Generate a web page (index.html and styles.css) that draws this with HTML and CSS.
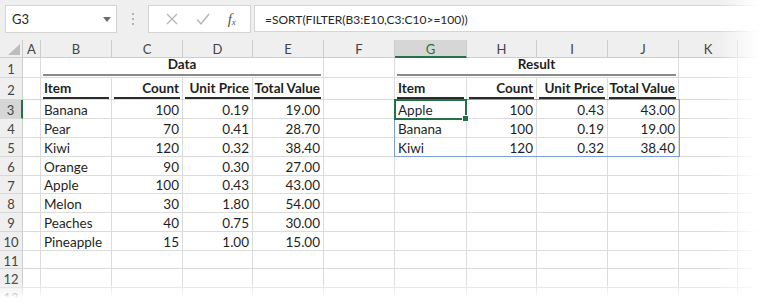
FILE: index.html
```html
<!DOCTYPE html>
<html lang="en">

<head>
    <meta charset="UTF-8">
    <title>SORT + FILTER</title>
    <link rel="stylesheet" href="styles.css">
</head>

<body>
    <div class="window">
        <div class="toolbar">
            <div class="namebox">
                <span>G3</span>
                <svg class="drop" width="8" height="5" viewBox="0 0 8 5"><path d="M0 0h8L4 5z" fill="#6d6d6d"/></svg>
            </div>
            <div class="grip"><i></i><i></i><i></i></div>
            <div class="fbuttons">
                <svg width="14" height="14" viewBox="0 0 14 14"><path d="M2 2l10 10M12 2L2 12" stroke="#b4b4b4" stroke-width="1.3"/></svg>
                <svg width="16" height="14" viewBox="0 0 16 14"><path d="M2 7.5l4 4.5L14 2" stroke="#b4b4b4" stroke-width="1.4" fill="none"/></svg>
                <span class="fx">f<sub>x</sub></span>
            </div>
            <div class="formula">=SORT(FILTER(B3:E10,C3:C10&gt;=100))</div>
        </div>

        <div class="sheet">
            <div class="row hdr">
                <div class="cell c-hd corner">
                    <svg width="12" height="11" viewBox="0 0 12 11"><path d="M0 11L12 0v11z" fill="#bdbdbd"/></svg>
                </div>
                <div class="cell c-a">A</div>
                <div class="cell c-b">B</div>
                <div class="cell c-c">C</div>
                <div class="cell c-d">D</div>
                <div class="cell c-e">E</div>
                <div class="cell c-f">F</div>
                <div class="cell c-g active">G</div>
                <div class="cell c-h">H</div>
                <div class="cell c-i">I</div>
                <div class="cell c-j">J</div>
                <div class="cell c-k">K</div>
                <div class="cell c-l"></div>
            </div>

            <div class="row r-20">
                <div class="cell c-hd rh">1</div>
                <div class="cell c-a"></div>
                <div class="cell c-bcde title"><span>Data</span></div>
                <div class="cell c-f"></div>
                <div class="cell c-ghij title"><span>Result</span></div>
                <div class="cell c-k"></div>
                <div class="cell c-l"></div>
            </div>

            <div class="row r-22">
                <div class="cell c-hd rh">2</div>
                <div class="cell c-a"></div>
                <div class="cell c-b head"><span>Item</span></div>
                <div class="cell c-c head num"><span>Count</span></div>
                <div class="cell c-d head num"><span>Unit Price</span></div>
                <div class="cell c-e head num"><span>Total Value</span></div>
                <div class="cell c-f"></div>
                <div class="cell c-g head"><span>Item</span></div>
                <div class="cell c-h head num"><span>Count</span></div>
                <div class="cell c-i head num"><span>Unit Price</span></div>
                <div class="cell c-j head num"><span>Total Value</span></div>
                <div class="cell c-k"></div>
                <div class="cell c-l"></div>
            </div>

            <div class="row r-19">
                <div class="cell c-hd rh active">3</div>
                <div class="cell c-a"></div>
                <div class="cell c-b">Banana</div>
                <div class="cell c-c num">100</div>
                <div class="cell c-d num">0.19</div>
                <div class="cell c-e num">19.00</div>
                <div class="cell c-f"></div>
                <div class="cell c-g">Apple</div>
                <div class="cell c-h num">100</div>
                <div class="cell c-i num">0.43</div>
                <div class="cell c-j num">43.00</div>
                <div class="cell c-k"></div>
                <div class="cell c-l"></div>
            </div>

            <div class="row r-19">
                <div class="cell c-hd rh">4</div>
                <div class="cell c-a"></div>
                <div class="cell c-b">Pear</div>
                <div class="cell c-c num">70</div>
                <div class="cell c-d num">0.41</div>
                <div class="cell c-e num">28.70</div>
                <div class="cell c-f"></div>
                <div class="cell c-g">Banana</div>
                <div class="cell c-h num">100</div>
                <div class="cell c-i num">0.19</div>
                <div class="cell c-j num">19.00</div>
                <div class="cell c-k"></div>
                <div class="cell c-l"></div>
            </div>

            <div class="row r-19">
                <div class="cell c-hd rh">5</div>
                <div class="cell c-a"></div>
                <div class="cell c-b">Kiwi</div>
                <div class="cell c-c num">120</div>
                <div class="cell c-d num">0.32</div>
                <div class="cell c-e num">38.40</div>
                <div class="cell c-f"></div>
                <div class="cell c-g">Kiwi</div>
                <div class="cell c-h num">120</div>
                <div class="cell c-i num">0.32</div>
                <div class="cell c-j num">38.40</div>
                <div class="cell c-k"></div>
                <div class="cell c-l"></div>
            </div>

            <div class="row r-19">
                <div class="cell c-hd rh">6</div>
                <div class="cell c-a"></div>
                <div class="cell c-b">Orange</div>
                <div class="cell c-c num">90</div>
                <div class="cell c-d num">0.30</div>
                <div class="cell c-e num">27.00</div>
                <div class="cell c-f"></div>
                <div class="cell c-g"></div>
                <div class="cell c-h"></div>
                <div class="cell c-i"></div>
                <div class="cell c-j"></div>
                <div class="cell c-k"></div>
                <div class="cell c-l"></div>
            </div>

            <div class="row r-18">
                <div class="cell c-hd rh">7</div>
                <div class="cell c-a"></div>
                <div class="cell c-b">Apple</div>
                <div class="cell c-c num">100</div>
                <div class="cell c-d num">0.43</div>
                <div class="cell c-e num">43.00</div>
                <div class="cell c-f"></div>
                <div class="cell c-g"></div>
                <div class="cell c-h"></div>
                <div class="cell c-i"></div>
                <div class="cell c-j"></div>
                <div class="cell c-k"></div>
                <div class="cell c-l"></div>
            </div>

            <div class="row r-19">
                <div class="cell c-hd rh">8</div>
                <div class="cell c-a"></div>
                <div class="cell c-b">Melon</div>
                <div class="cell c-c num">30</div>
                <div class="cell c-d num">1.80</div>
                <div class="cell c-e num">54.00</div>
                <div class="cell c-f"></div>
                <div class="cell c-g"></div>
                <div class="cell c-h"></div>
                <div class="cell c-i"></div>
                <div class="cell c-j"></div>
                <div class="cell c-k"></div>
                <div class="cell c-l"></div>
            </div>

            <div class="row r-19">
                <div class="cell c-hd rh">9</div>
                <div class="cell c-a"></div>
                <div class="cell c-b">Peaches</div>
                <div class="cell c-c num">40</div>
                <div class="cell c-d num">0.75</div>
                <div class="cell c-e num">30.00</div>
                <div class="cell c-f"></div>
                <div class="cell c-g"></div>
                <div class="cell c-h"></div>
                <div class="cell c-i"></div>
                <div class="cell c-j"></div>
                <div class="cell c-k"></div>
                <div class="cell c-l"></div>
            </div>

            <div class="row r-19">
                <div class="cell c-hd rh">10</div>
                <div class="cell c-a"></div>
                <div class="cell c-b">Pineapple</div>
                <div class="cell c-c num">15</div>
                <div class="cell c-d num">1.00</div>
                <div class="cell c-e num">15.00</div>
                <div class="cell c-f"></div>
                <div class="cell c-g"></div>
                <div class="cell c-h"></div>
                <div class="cell c-i"></div>
                <div class="cell c-j"></div>
                <div class="cell c-k"></div>
                <div class="cell c-l"></div>
            </div>

            <div class="row r-18">
                <div class="cell c-hd rh">11</div>
                <div class="cell c-a"></div>
                <div class="cell c-b"></div>
                <div class="cell c-c"></div>
                <div class="cell c-d"></div>
                <div class="cell c-e"></div>
                <div class="cell c-f"></div>
                <div class="cell c-g"></div>
                <div class="cell c-h"></div>
                <div class="cell c-i"></div>
                <div class="cell c-j"></div>
                <div class="cell c-k"></div>
                <div class="cell c-l"></div>
            </div>

            <div class="row r-19">
                <div class="cell c-hd rh">12</div>
                <div class="cell c-a"></div>
                <div class="cell c-b"></div>
                <div class="cell c-c"></div>
                <div class="cell c-d"></div>
                <div class="cell c-e"></div>
                <div class="cell c-f"></div>
                <div class="cell c-g"></div>
                <div class="cell c-h"></div>
                <div class="cell c-i"></div>
                <div class="cell c-j"></div>
                <div class="cell c-k"></div>
                <div class="cell c-l"></div>
            </div>

            <div class="row r-19">
                <div class="cell c-hd rh">13</div>
                <div class="cell c-a"></div>
                <div class="cell c-b"></div>
                <div class="cell c-c"></div>
                <div class="cell c-d"></div>
                <div class="cell c-e"></div>
                <div class="cell c-f"></div>
                <div class="cell c-g"></div>
                <div class="cell c-h"></div>
                <div class="cell c-i"></div>
                <div class="cell c-j"></div>
                <div class="cell c-k"></div>
                <div class="cell c-l"></div>
            </div>

            <!-- spill range outline and the active cell -->
            <div class="spill"></div>
            <div class="selection"><i class="handle"></i></div>
        </div>

        <div class="fade-right"></div>
        <div class="fade-bottom"></div>
    </div>
</body>

</html>
```

FILE: styles.css
```css
:root {
    --grid-color: #dcdcdc;
    --header-bg: #efefef;
    --header-line: #cdcdcd;
    --green: #217346;
    --spill-blue: #7e9ed9;
}

body {
    margin: 0;
    background-color: #ffffff;
    font-family: Lato, "Open Sans", sans-serif;
    color: #1f1f1f;
}

.window {
    position: relative;
    width: 768px;
    height: 304px;
    overflow: hidden;
    background-color: #ffffff;
}

/* formula bar */

.toolbar {
    display: flex;
    align-items: flex-start;
    height: 40px;
    padding: 5px 0 0 5px;
    box-sizing: border-box;
    background-color: #efefef;
}

.namebox {
    display: flex;
    align-items: center;
    justify-content: space-between;
    width: 112px;
    height: 28px;
    padding: 0 5px 0 6px;
    box-sizing: border-box;
    background-color: #ffffff;
    border: 1px solid #d4d4d4;
    font-size: 13px;
    color: #262626;
}

.grip {
    display: flex;
    flex-direction: column;
    justify-content: center;
    gap: 3px;
    width: 31px;
    height: 28px;
    align-items: center;
}

.grip i {
    width: 2px;
    height: 2px;
    background-color: #b4b4b4;
}

.fbuttons {
    display: flex;
    align-items: center;
    justify-content: space-around;
    width: 103px;
    height: 28px;
    padding: 0 6px 0 8px;
    box-sizing: border-box;
    background-color: #ffffff;
    border: 1px solid #d4d4d4;
}

.fx {
    font-family: "Liberation Serif", serif;
    font-style: italic;
    font-size: 15px;
    color: #555555;
}

.fx sub {
    font-size: 9px;
    vertical-align: -1px;
}

.formula {
    flex: 1;
    height: 27px;
    margin-left: 3px;
    padding: 1px 0 0 10px;
    line-height: 25px;
    box-sizing: border-box;
    background-color: #ffffff;
    border: 1px solid #d4d4d4;
    border-right: none;
    font-size: 12px;
    color: #262626;
}

/* sheet */

.sheet {
    position: relative;
}

.row {
    display: flex;
}

.r-18 { height: 18px; }
.r-19 { height: 19px; }
.r-20 { height: 20px; }
.r-22 { height: 22px; }

.cell {
    display: flex;
    align-items: flex-end;
    flex-shrink: 0;
    padding: 0 3px 0 3px;
    box-sizing: border-box;
    border-right: 1px solid var(--grid-color);
    border-bottom: 1px solid var(--grid-color);
    font-size: 13.5px;
    line-height: 15px;
    white-space: nowrap;
}

.c-hd { width: 23px; }
.c-a { width: 18px; }
.c-b { width: 71px; }
.c-c { width: 71px; }
.c-d { width: 70px; }
.c-e { width: 71px; }
.c-f { width: 71px; }
.c-g { width: 72px; }
.c-h { width: 70px; }
.c-i { width: 71px; }
.c-j { width: 71px; }
.c-k { width: 59px; }
.c-l { width: 40px; }
.c-bcde { width: 283px; }
.c-ghij { width: 284px; }

.num {
    justify-content: flex-end;
}

/* column and row headers */

.hdr {
    height: 18px;
}

.hdr .cell {
    align-items: center;
    justify-content: center;
    padding: 2px 0 0 0;
    background-color: var(--header-bg);
    border-right-color: var(--header-line);
    border-bottom-color: var(--header-line);
    font-size: 13px;
    color: #444444;
}

.hdr .corner {
    align-items: flex-end;
    justify-content: flex-end;
    padding: 0 2px 2px 0;
}

.hdr .active {
    background-color: #d6d6d6;
    border-bottom: 2px solid var(--green);
    color: var(--green);
}

.rh {
    align-items: center;
    justify-content: center;
    padding: 3px 0 0 0;
    background-color: var(--header-bg);
    border-right-color: var(--header-line);
    border-bottom-color: #d8d8d8;
    font-size: 13px;
    color: #444444;
}

.rh.active {
    background-color: #d6d6d6;
    border-right: 2px solid var(--green);
}

/* table headings */

.title {
    justify-content: center;
    padding: 0 2px 0 2px;
    font-weight: bold;
}

.title span {
    display: block;
    width: 100%;
    text-align: center;
    padding-bottom: 2px;
    border-bottom: 2px solid #8a8a8a;
    margin-bottom: 1px;
}

.head {
    padding: 0 2px 0 2px;
    font-weight: bold;
}

.head span {
    display: block;
    width: 100%;
    padding: 0 1px 1px 1px;
    border-bottom: 2px solid #2b2b2b;
}

.head.num span {
    text-align: right;
}

/* overlays */

.spill {
    position: absolute;
    left: 394px;
    top: 59px;
    width: 286px;
    height: 58px;
    border: 1px solid var(--spill-blue);
    box-sizing: border-box;
    pointer-events: none;
}

.selection {
    position: absolute;
    left: 394px;
    top: 59px;
    width: 73px;
    height: 21px;
    border: 2px solid var(--green);
    box-sizing: border-box;
}

.handle {
    position: absolute;
    right: -4px;
    bottom: -4px;
    width: 5px;
    height: 5px;
    background-color: var(--green);
    border: 1px solid #ffffff;
}

.fade-right {
    position: absolute;
    top: 0;
    right: 0;
    width: 50px;
    height: 100%;
    background: linear-gradient(to right, rgba(255, 255, 255, 0), #ffffff 80%);
}

.fade-bottom {
    position: absolute;
    left: 0;
    bottom: 0;
    width: 100%;
    height: 22px;
    background: linear-gradient(to bottom, rgba(255, 255, 255, 0), #ffffff 75%);
}
```
